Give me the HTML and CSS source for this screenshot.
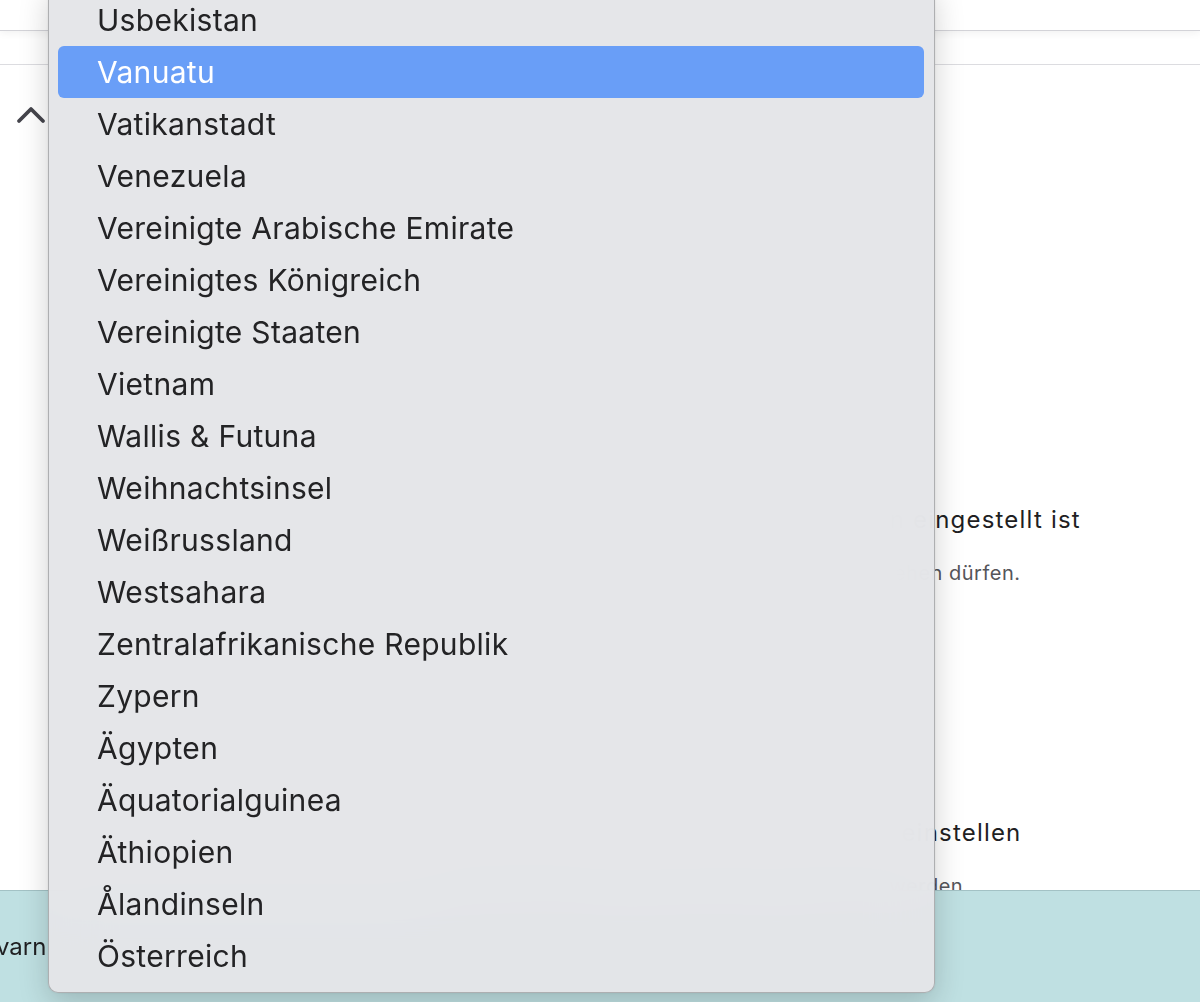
FILE: index.html
```html
<!DOCTYPE html>
<html lang="de">
<head>
    <meta charset="UTF-8">
    <meta name="viewport" content="width=device-width, initial-scale=1.0">
    <title>Land auswählen</title>
    <link rel="stylesheet" href="styles.css">
</head>
<body>
    <header class="topbar"></header>
    <nav class="subbar"></nav>

    <main class="content">
        <button class="collapse" type="button" aria-label="Einklappen">
            <svg width="32" height="20" viewBox="0 0 32 20">
                <polyline points="3,16 15,4 27,16" fill="none" stroke="#45454c" stroke-width="3.8" stroke-linecap="round" stroke-linejoin="round"/>
            </svg>
        </button>

        <section class="settings">
            <div class="setting first">
                <div class="setting-title">Inhalte nur anzeigen, wenn die Region eingestellt ist</div>
                <div class="setting-desc">Legt fest, aus welchen Ländern Gäste Inhalte sehen dürfen.</div>
            </div>
            <div class="setting second">
                <div class="setting-title">Standardland für alle neuen Benutzer einstellen</div>
                <div class="setting-desc">Gilt für alle Konten, die ab heute neu angelegt werden</div>
            </div>
        </section>
    </main>

    <!-- Hinweisleiste unten -->
    <div class="banner">
        <span class="banner-text">varn</span>
    </div>

    <!-- Geöffnetes Auswahlmenü -->
    <ul class="menu" id="countryMenu">
        <li>Usbekistan</li>
        <li class="selected">Vanuatu</li>
        <li>Vatikanstadt</li>
        <li>Venezuela</li>
        <li>Vereinigte Arabische Emirate</li>
        <li>Vereinigtes Königreich</li>
        <li>Vereinigte Staaten</li>
        <li>Vietnam</li>
        <li>Wallis &amp; Futuna</li>
        <li>Weihnachtsinsel</li>
        <li>Weißrussland</li>
        <li>Westsahara</li>
        <li>Zentralafrikanische Republik</li>
        <li>Zypern</li>
        <li>Ägypten</li>
        <li>Äquatorialguinea</li>
        <li>Äthiopien</li>
        <li>Ålandinseln</li>
        <li>Österreich</li>
    </ul>
</body>
</html>
```
FILE: styles.css
```css
html, body {
    margin: 0;
    height: 100%;
    overflow: hidden;
}
body {
    font-family: Inter, "Noto Sans", "Liberation Sans", sans-serif;
    color: #1f1f21;
    background-color: #fff;
}
.topbar {
    height: 30px;
    border-bottom: 1px solid #d3d3d8;
    box-shadow: 0 2px 8px rgba(0, 0, 0, 0.06);
    position: relative;
}
.subbar {
    height: 33px;
    border-bottom: 1px solid #dcdce0;
}
.content {
    display: flex;
}
.collapse {
    background: none;
    border: none;
    padding: 0;
    margin: 40px 0 0 16px;
    width: 32px;
    height: 20px;
    align-self: flex-start;
    flex-shrink: 0;
}
.collapse svg {
    display: block;
}
.settings {
    margin-left: 381px;
    white-space: nowrap;
}
.setting-title {
    font-size: 24px;
    line-height: 30px;
    letter-spacing: 1.2px;
    color: #1f1f23;
}
.setting-desc {
    font-size: 20px;
    line-height: 26px;
    letter-spacing: 0.5px;
    color: #55555a;
    margin-top: 25px;
}
.setting.first {
    margin-top: 440px;
}
.setting.second {
    margin-top: 232px;
}
.banner {
    position: fixed;
    left: 0;
    right: 0;
    bottom: 0;
    height: 111px;
    background-color: #bfe0e2;
    border-top: 1px solid #a3c2c5;
}
.banner-text {
    display: block;
    margin: 42px 0 0 -4px;
    font-size: 24px;
    line-height: 28px;
}
.menu {
    position: absolute;
    left: 48px;
    top: -17px;
    width: 866px;
    margin: 0;
    padding: 10px 10px 10px 9px;
    list-style: none;
    background-color: rgba(228, 229, 232, 0.97);
    -webkit-backdrop-filter: blur(30px);
    backdrop-filter: blur(30px);
    border: 1px solid rgba(0, 0, 0, 0.24);
    border-radius: 10px;
    box-shadow: 0 10px 30px rgba(0, 0, 0, 0.18), 0 0 3px rgba(0, 0, 0, 0.08);
}
.menu li {
    height: 52px;
    line-height: 52px;
    padding-left: 39px;
    font-size: 30px;
    letter-spacing: 0.3px;
    color: #232325;
    border-radius: 6px;
}
.menu li.selected {
    background-color: #699ef7;
    color: #fff;
}
```
